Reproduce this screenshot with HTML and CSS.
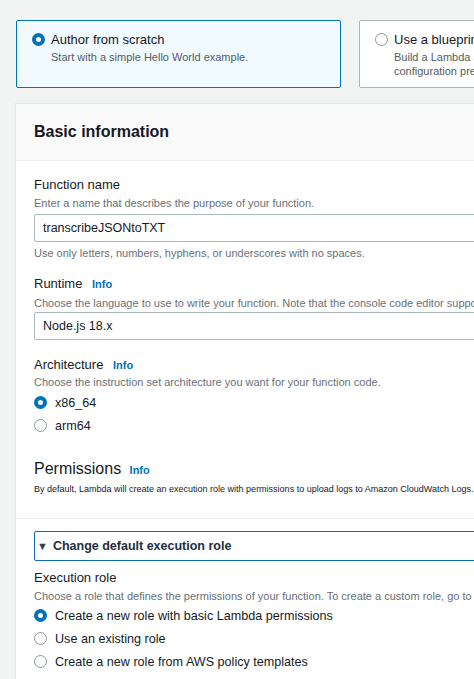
FILE: index.html
```html
<!DOCTYPE html>
<html lang="en">
<head>
<meta charset="utf-8">
<title>Create function</title>
<link rel="stylesheet" href="styles.css">
</head>
<body>
<div class="page">
  <div class="tiles">
    <div class="tile selected">
      <span class="radio on"></span>
      <div class="tile-text">
        <div class="tile-title">Author from scratch</div>
        <div class="tile-desc">Start with a simple Hello World example.</div>
      </div>
    </div>
    <div class="tile">
      <span class="radio"></span>
      <div class="tile-text">
        <div class="tile-title">Use a blueprint</div>
        <div class="tile-desc">Build a Lambda application from sample code and<br>configuration presets for common use cases.</div>
      </div>
    </div>
  </div>

  <div class="panel">
    <div class="panel-header">
      <h2>Basic information</h2>
    </div>
    <div class="panel-body">
      <div class="field">
        <div class="label">Function name</div>
        <div class="desc">Enter a name that describes the purpose of your function.</div>
        <div class="input">transcribeJSONtoTXT</div>
        <div class="hint">Use only letters, numbers, hyphens, or underscores with no spaces.</div>
      </div>

      <div class="field runtime">
        <div class="label">Runtime <a class="info">Info</a></div>
        <div class="desc">Choose the language to use to write your function. Note that the console code editor supports only Node.js, Python, and Ruby.</div>
        <div class="input">Node.js 18.x</div>
      </div>

      <div class="field arch">
        <div class="label">Architecture <a class="info">Info</a></div>
        <div class="desc">Choose the instruction set architecture you want for your function code.</div>
        <div class="option"><span class="radio on"></span>x86_64</div>
        <div class="option"><span class="radio"></span>arm64</div>
      </div>

      <div class="perm">
        <h3>Permissions <a class="info">Info</a></h3>
        <div class="perm-desc">By default, Lambda will create an execution role with permissions to upload logs to Amazon CloudWatch Logs. You can customize this default role later when adding triggers.</div>
      </div>
    </div>

    <div class="panel-section">
      <div class="expander"><span class="caret">&#9660;</span>Change default execution role</div>
      <div class="field role">
        <div class="label">Execution role</div>
        <div class="desc">Choose a role that defines the permissions of your function. To create a custom role, go to the IAM console.</div>
        <div class="option"><span class="radio on"></span>Create a new role with basic Lambda permissions</div>
        <div class="option"><span class="radio"></span>Use an existing role</div>
        <div class="option"><span class="radio"></span>Create a new role from AWS policy templates</div>
      </div>
    </div>
  </div>
</div>
</body>
</html>
```
FILE: styles.css
```css
html, body {
  margin: 0;
  padding: 0;
}
body {
  background: #f2f3f3;
  width: 474px;
  height: 679px;
  overflow: hidden;
  font-family: "Liberation Sans", Arial, sans-serif;
  color: #16191f;
}
.page {
  width: 1000px;
  padding: 20px 0 0 16px;
}
.tiles {
  display: flex;
  gap: 18px;
}
.tile {
  box-sizing: border-box;
  width: 325px;
  height: 68px;
  border: 1px solid #aab7b8;
  border-radius: 2px;
  background: #ffffff;
  display: flex;
  align-items: flex-start;
  padding: 10px 0 0 15px;
}
.tile.selected {
  border-color: #0073bb;
  background: #f1faff;
}
.tile-text {
  margin-left: 6px;
}
.tile-title {
  font-size: 13px;
  line-height: 17px;
}
.tile-desc {
  font-size: 11px;
  line-height: 14px;
  color: #545b64;
  margin-top: 2px;
}
.radio {
  display: inline-block;
  box-sizing: border-box;
  width: 13px;
  height: 13px;
  border-radius: 50%;
  border: 1px solid #8d969e;
  background: #fff;
  flex: none;
}
.radio.on {
  border: 4px solid #0073bb;
}
.tile .radio {
  margin-top: 2px;
}
.panel {
  margin-top: 15px;
  margin-left: -1px;
  background: #ffffff;
  border: 1px solid #e4e7e8;
  box-shadow: 0 1px 1px rgba(0, 28, 36, 0.15);
  min-height: 700px;
}
.panel-header {
  background: #fafafa;
  height: 56px;
  border-bottom: 1px solid #eaeded;
  display: flex;
  align-items: center;
  padding-left: 18px;
}
.panel-header h2 {
  margin: 0;
  font-size: 16px;
  font-weight: bold;
}
.panel-body {
  padding: 15px 0 0 18px;
  border-bottom: 1px solid #eaeded;
}
.label {
  font-size: 13px;
  line-height: 18px;
}
.desc {
  font-size: 11px;
  line-height: 16px;
  color: #687078;
  margin-top: 1px;
  white-space: nowrap;
}
.info {
  color: #0073bb;
  font-weight: bold;
  font-size: 11px;
  margin-left: 6px;
}
.input {
  box-sizing: border-box;
  height: 28px;
  margin-top: 3px;
  border: 1px solid #aab7b8;
  border-radius: 2px;
  font-size: 12.5px;
  line-height: 26px;
  padding-left: 8px;
}
.hint {
  font-size: 11px;
  line-height: 16px;
  color: #687078;
  margin-top: 3px;
}
.runtime {
  margin-top: 14px;
}
.runtime .desc {
  margin-top: 2px;
}
.runtime .input {
  margin-top: 1px;
}
.arch {
  margin-top: 16px;
}
.option {
  display: flex;
  align-items: center;
  font-size: 12.6px;
  line-height: 22px;
  height: 23px;
}
.option .radio {
  margin-right: 8px;
}
.arch .desc {
  margin-top: 0;
  margin-bottom: 1px;
}
.perm {
  margin-top: 20px;
  padding-bottom: 23px;
}
.perm h3 {
  margin: 0;
  font-size: 16px;
  line-height: 24px;
  font-weight: normal;
}
.perm h3 .info {
  margin-left: 4px;
}
.perm-desc {
  font-size: 9px;
  line-height: 12px;
  margin-top: 1px;
  white-space: nowrap;
}
.panel-section {
  padding: 12px 0 0 18px;
}
.expander {
  box-sizing: border-box;
  height: 30px;
  border: 1px solid #0f6cb0;
  border-radius: 2px;
  display: flex;
  align-items: center;
  font-size: 12.5px;
  font-weight: bold;
  color: #232f3e;
  padding-left: 2px;
}
.caret {
  font-size: 11px;
  margin-right: 5px;
  color: #3a424c;
}
.role {
  margin-top: 8px;
}
.role .desc {
  margin-top: 1px;
}
```
